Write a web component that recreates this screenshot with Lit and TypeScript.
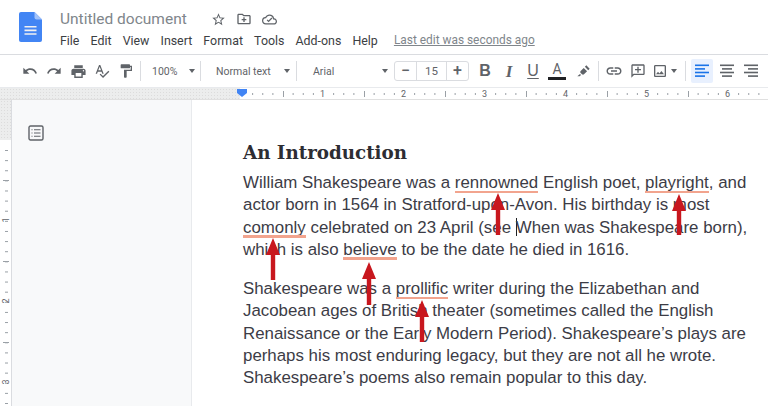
import { LitElement, html, css, svg } from "lit";
import { customElement } from "lit/decorators.js";

const P = {
  undo: "M12.5 8c-2.65 0-5.05.99-6.9 2.6L2 7v9h9l-3.62-3.62c1.39-1.16 3.16-1.88 5.12-1.88 3.54 0 6.55 2.31 7.6 5.5l2.37-.78C21.08 11.03 17.15 8 12.5 8z",
  redo: "M18.4 10.6C16.55 8.99 14.15 8 11.5 8c-4.65 0-8.58 3.03-9.96 7.22L3.9 16c1.05-3.19 4.05-5.5 7.6-5.5 1.95 0 3.73.72 5.12 1.88L13 16h9V7l-3.6 3.6z",
  print: "M19 8H5c-1.66 0-3 1.34-3 3v6h4v4h12v-4h4v-6c0-1.66-1.34-3-3-3zm-3 11H8v-5h8v5zm3-7c-.55 0-1-.45-1-1s.45-1 1-1 1 .45 1 1-.45 1-1 1zm-1-9H6v4h12V3z",
  spell: "M12.45 16h2.09L9.43 3H7.57L2.46 16h2.09l1.12-3h5.64l1.14 3zm-6.02-5L8.5 5.48 10.57 11H6.43zm15.16.59l-8.09 8.09L9.83 16l-1.41 1.41 5.09 5.09L23 13l-1.41-1.41z",
  paint: "M18 4V3c0-.55-.45-1-1-1H5c-.55 0-1 .45-1 1v4c0 .55.45 1 1 1h12c.55 0 1-.45 1-1V6h1v4H9v11c0 .55.45 1 1 1h2c.55 0 1-.45 1-1v-9h8V4h-3z",
  link: "M3.9 12c0-1.71 1.39-3.1 3.1-3.1h4V7H7c-2.76 0-5 2.24-5 5s2.24 5 5 5h4v-1.9H7c-1.71 0-3.1-1.39-3.1-3.1zM8 13h8v-2H8v2zm9-6h-4v1.9h4c1.71 0 3.1 1.39 3.1 3.1s-1.39 3.1-3.1 3.1h-4V17h4c2.76 0 5-2.24 5-5s-2.24-5-5-5z",
  comment: "M20 2H4c-1.1 0-2 .9-2 2v18l4-4h14c1.1 0 2-.9 2-2V4c0-1.1-.9-2-2-2zm0 14H5.2L4 17.2V4h16v12zM11 5.5h2V9h3.5v2H13v3.5h-2V11H7.5V9H11V5.5z",
  image: "M19 5v14H5V5h14m0-2H5c-1.1 0-2 .9-2 2v14c0 1.1.9 2 2 2h14c1.1 0 2-.9 2-2V5c0-1.1-.9-2-2-2zm-4.86 8.86l-3 3.87L9 13.14 6 17h12l-3.86-5.14z",
  pen: "M15.5 3.5l5 5-2.2 2.2-5-5zM11.6 7.4l5 5-4.6 4.6c-.8.8-2.2.8-3 0l-2-2c-.8-.8-.8-2.2 0-3zM6 16.5l1.5 1.5L5.5 20H2z",
  star: "M22 9.24l-7.19-.62L12 2 9.19 8.63 2 9.24l5.46 4.73L5.82 21 12 17.27 18.18 21l-1.63-7.03L22 9.24zM12 15.4l-3.76 2.27 1-4.28-3.32-2.88 4.38-.38L12 6.1l1.71 4.04 4.38.38-3.32 2.88 1 4.28L12 15.4z",
  folder: "M20 6h-8l-2-2H4c-1.1 0-2 .9-2 2v12c0 1.1.9 2 2 2h16c1.1 0 2-.9 2-2V8c0-1.1-.9-2-2-2zm0 12H4V6h5.2l2 2H20v10zM11 9.5h2V12h2.5v2H13v2.5h-2V14H8.5v-2H11V9.5z",
  cloud: "M19.35 10.04A7.49 7.49 0 0 0 12 4C9.11 4 6.6 5.64 5.35 8.04A5.99 5.99 0 0 0 0 14c0 3.31 2.69 6 6 6h13c2.76 0 5-2.24 5-5 0-2.64-2.05-4.78-4.65-4.96zM19 18H6c-2.21 0-4-1.79-4-4 0-2.05 1.53-3.76 3.56-3.97l1.07-.11.5-.95A5.47 5.47 0 0 1 12 6c2.62 0 4.88 1.86 5.39 4.43l.3 1.5 1.53.11A2.98 2.98 0 0 1 22 15c0 1.65-1.35 3-3 3zM10.500 16.200l-3-3 1.400-1.400 1.600 1.600 4.600-4.600 1.400 1.400z",
};

const icon = (d: string, size = 18, fill = "#5f6368") =>
  html`<svg width=${size} height=${size} viewBox="0 0 24 24" fill=${fill}><path d=${d}></path></svg>`;

const alignIcon = (kind: "l" | "c" | "r", color: string) => {
  const rows = [14, 10, 14, 10];
  return html`<svg width="16" height="16" viewBox="0 0 16 16" fill=${color}>
    ${rows.map((w, i) => {
      const x = kind === "l" ? 1 : kind === "r" ? 15 - w : 8 - w / 2;
      return svg`<rect x=${x} y=${1.5 + i * 3.6} width=${w} height="1.6"></rect>`;
    })}
  </svg>`;
};

const horizontalTicks = () => {
  const out: unknown[] = [];
  for (let i = -1; i <= 7; i++) {
    const x0 = 242 + i * 81;
    for (let j = 1; j < 8; j++) {
      if (j === 4) continue;
      const x = x0 + (j * 81) / 8;
      if (x < 240 || x > 768) continue;
      out.push(svg`<rect x=${x} y="5" width="1" height="2" fill="#9aa0a6"></rect>`);
    }
  }
  for (const x of [283, 364, 445, 526, 607, 688]) {
    out.push(svg`<rect x=${x} y="3" width="1" height="6" fill="#9aa0a6"></rect>`);
  }
  return out;
};

const verticalTicks = () => {
  const out: unknown[] = [];
  for (let y = 150; y < 406; y += 10.12) {
    out.push(svg`<rect x="5" y=${y} width="3" height="1" fill="#9aa0a6"></rect>`);
  }
  for (const y of [180, 261, 342]) {
    out.push(svg`<rect x="3" y=${y} width="6" height="1" fill="#9aa0a6"></rect>`);
  }
  return out;
};

@customElement("app-root")
export class AppRoot extends LitElement {
  static styles = css`
    :host {
      display: flex;
      flex-direction: column;
      width: 768px;
      height: 406px;
      overflow: hidden;
      background: #fff;
      font-family: Roboto, "Liberation Sans", sans-serif;
      color: #3c4043;
    }
    svg { display: block; flex: none; }

    .header {
      display: flex;
      height: 55px;
      flex: none;
      box-sizing: border-box;
      border-bottom: 1px solid #dadce0;
      padding: 12px 0 0 19px;
    }
    .logo { width: 23px; height: 30px; margin-right: 18px; }
    .head-col { display: flex; flex-direction: column; }
    .title-row { display: flex; align-items: center; height: 14px; }
    .title { font-size: 15.5px; color: #80868b; width: 151px; white-space: nowrap; }
    .title-icons { display: flex; gap: 10px; align-items: center; }
    .menu { display: flex; font-size: 12.4px; margin-top: 4px; color: #3c4043; height: 20px; align-items: center; }
    .menu span { margin-right: 11.1px; white-space: nowrap; }
    .menu .last { color: #80868b; text-decoration: underline; margin-left: 5px; margin-right: 0; font-size: 11.9px; }

    .toolbar {
      display: flex;
      align-items: center;
      height: 32px;
      flex: none;
      padding-left: 18px;
      font-size: 10.5px;
      color: #5f6368;
    }
    .btn { display: flex; align-items: center; justify-content: center; width: 24px; height: 24px; flex: none; }
    .sep { width: 1px; height: 20px; background: #dadce0; flex: none; margin: 0 2px; }
    .sep-flush { margin: 0; }
    .sep-img { margin: 0 5px 0 1px; }
    .drop { display: flex; align-items: center; height: 24px; flex: none; box-sizing: border-box; white-space: nowrap; }
    .drop .caret { margin-left: auto; width: 0; height: 0; border: 3.5px solid transparent; border-top: 4px solid #5f6368; border-bottom: 0; }
    .zoomd { width: 58px; padding: 0 5px 0 10px; margin-left: -1px; }
    .styled { width: 95px; padding: 0 6px 0 15px; }
    .fontd { width: 94px; padding: 0 3px 0 16px; margin-right: 3px; }
    .sizebox {
      display: flex; align-items: center; width: 75px; height: 20px; flex: none; box-sizing: border-box;
      border: 1px solid #dadce0; border-radius: 3px; font-size: 12px; margin-right: 4px;
    }
    .sizebox span { flex: none; width: 21px; text-align: center; font-size: 16px; font-weight: 500; line-height: 18px; }
    .sizebox .num { flex: 1; font-size: 11.5px; font-weight: 400; border-left: 1px solid #dadce0; border-right: 1px solid #dadce0; color: #5f6368; }
    .fmt { font-family: "Liberation Sans", sans-serif; font-size: 16px; line-height: 1; color: #5f6368; }
    .b { font-weight: 700; }
    .i { font-family: "Liberation Serif", serif; font-style: italic; font-size: 17px; font-weight: 700; }
    .u { text-decoration: underline; text-underline-offset: 2px; }
    .acol { display: flex; flex-direction: column; align-items: center; width: 18px; }
    .acol b { font-weight: 400; font-size: 14px; line-height: 15px; color: #5f6368; }
    .acol i { display: block; width: 18px; height: 3px; background: #202124; }
    .penbtn { margin-left: 3px; }
    .linkbtn { margin-left: 1px; }
    .imgbtn { width: 19px; }
    .imgcaret { width: 0; height: 0; border: 3.5px solid transparent; border-top: 4px solid #5f6368; border-bottom: 0; margin: 0 7px 0 2px; }
    .active { background: #e8f0fe; border-radius: 2px; width: 22px; margin-right: 2px; }

    .ruler {
      position: relative;
      display: flex;
      height: 13px;
      flex: none;
      box-sizing: border-box;
      border-top: 1px solid #e8eaed;
      border-bottom: 1px solid #e0e0e0;
      font-size: 9px;
      color: #5f6368;
    }
    .ruler-gray {
      width: 240px;
      flex: none;
      background-color: #eceded;
      background-image: radial-gradient(#dcdcdc 0.7px, transparent 0.8px);
      background-size: 3px 3px;
    }
    .ruler-white { flex: 1; display: flex; padding-left: 42px; line-height: 12px; }
    .ruler-white span { width: 81px; flex: none; text-align: center; }
    .ruler-ticks { position: absolute; left: 0; top: 0; pointer-events: none; }
    .tab { position: absolute; left: 237px; top: 1px; width: 10px; height: 8px; }

    .main { display: flex; flex: 1; min-height: 0; }
    .vruler {
      position: relative;
      width: 12px;
      flex: none;
      border-right: 1px solid #dadce0;
      box-sizing: border-box;
      font-size: 9px;
      color: #5f6368;
    }
    .vruler .gray {
      height: 40px;
      background-color: #eceded;
      background-image: radial-gradient(#dcdcdc 0.7px, transparent 0.8px);
      background-size: 3px 3px;
    }
    .vnums { display: flex; flex-direction: column; padding-top: 74px; }
    .vnums span { height: 81px; line-height: 12px; width: 11px; text-align: center; flex: none; }
    .vnums b { display: block; font-weight: 400; transform: rotate(-90deg); }
    .vticks { position: absolute; left: 0; top: -100px; }

    .side { width: 180px; flex: none; background: #f8f9fa; border-right: 1px solid #e8eaed; box-sizing: border-box; padding: 25px 0 0 16px; }

    .page {
      position: relative;
      flex: 1;
      padding: 41px 0 0 51px;
      font-family: "Liberation Sans", Arial, sans-serif;
      font-size: 16.87px;
      line-height: 22.25px;
      color: #3c3c46;
      white-space: nowrap;
    }
    h1 {
      margin: 0 0 7px;
      font-family: "DejaVu Serif", serif;
      font-size: 18.3px;
      line-height: 24px;
      font-weight: 700;
      color: #2d2d33;
    }
    p { margin: 0 0 17px; }
    .err { position: relative; }
    .err::after {
      content: ""; position: absolute; left: 0; right: 0; bottom: -1px; height: 2.5px; background: #f2a48e;
    }
    .caret-mark { display: inline-block; width: 1.5px; height: 18px; background: #202124; vertical-align: -3px; margin-right: -1.5px; }
    .arrow { position: absolute; }
  `;

  private arrow(x: number, y1: number, y2: number) {
    const w = 18;
    return html`<svg class="arrow" style="left:${x - w / 2 - 192}px;top:${y1 - 100}px" width=${w} height=${y2 - y1} viewBox="0 0 ${w} ${y2 - y1}">
      <path fill="#c8171e" d="M${w / 2} 0L${w / 2 + 7} 17H${w / 2 + 2.2}V${y2 - y1}H${w / 2 - 2.2}V17H${w / 2 - 7}Z"></path>
    </svg>`;
  }

  render() {
    return html`
      <div class="header">
        <svg class="logo" viewBox="0 0 23 30">
          <path fill="#4285f4" d="M2 0h13.500L23 7.500V28a2 2 0 0 1-2 2H2a2 2 0 0 1-2-2V2a2 2 0 0 1 2-2z"></path>
          <path fill="#a1c2fa" d="M15.500 0L23 7.500h-5.500a2 2 0 0 1-2-2z"></path>
          <path fill="#f1f1f1" d="M5.500 14h12v1.600h-12zM5.500 17.600h12v1.600h-12zM5.500 21.200h12v1.600h-12z"></path>
        </svg>
        <div class="head-col">
          <div class="title-row">
            <span class="title">Untitled document</span>
            <div class="title-icons">
              ${icon(P.star, 15)}${icon(P.folder, 16)}${icon(P.cloud, 15)}
            </div>
          </div>
          <div class="menu">
            <span>File</span><span>Edit</span><span>View</span><span>Insert</span><span>Format</span><span>Tools</span><span>Add-ons</span><span>Help</span>
            <span class="last">Last edit was seconds ago</span>
          </div>
        </div>
      </div>

      <div class="toolbar">
        <div class="btn">${icon(P.undo, 16)}</div>
        <div class="btn">${icon(P.redo, 16)}</div>
        <div class="btn">${icon(P.print, 17)}</div>
        <div class="btn">${icon(P.spell, 16)}</div>
        <div class="btn">${icon(P.paint, 16)}</div>
        <div class="sep"></div>
        <div class="drop zoomd"><span>100%</span><i class="caret"></i></div>
        <div class="sep sep-flush"></div>
        <div class="drop styled"><span>Normal text</span><i class="caret"></i></div>
        <div class="sep sep-flush"></div>
        <div class="drop fontd"><span>Arial</span><i class="caret"></i></div>
        <div class="sizebox"><span>−</span><span class="num">15</span><span>+</span></div>
        <div class="btn"><span class="fmt b">B</span></div>
        <div class="btn"><span class="fmt i">I</span></div>
        <div class="btn"><span class="fmt u">U</span></div>
        <div class="btn"><div class="acol"><b>A</b><i></i></div></div>
        <div class="btn penbtn">${icon(P.pen, 16)}</div>
        <div class="sep"></div>
        <div class="btn linkbtn">${icon(P.link, 18)}</div>
        <div class="btn">${icon(P.comment, 16)}</div>
        <div class="btn imgbtn">${icon(P.image, 16)}</div>
        <i class="imgcaret"></i>
        <div class="sep sep-img"></div>
        <div class="btn active">${alignIcon("l", "#1a73e8")}</div>
        <div class="btn">${alignIcon("c", "#5f6368")}</div>
        <div class="btn">${alignIcon("r", "#5f6368")}</div>
      </div>

      <div class="ruler">
        <div class="ruler-gray"></div>
        <div class="ruler-white">
          <span>1</span><span>2</span><span>3</span><span>4</span><span>5</span><span>6</span>
        </div>
        <svg class="ruler-ticks" width="768" height="12">${horizontalTicks()}</svg>
        <svg class="tab" viewBox="0 0 10 8"><path fill="#4285f4" d="M0 0h10v4L5 8 0 4z"></path></svg>
      </div>

      <div class="main">
        <div class="vruler">
          <div class="gray"></div>
          <svg class="vticks" width="12" height="406">${verticalTicks()}</svg>
          <div class="vnums"><span><b>1</b></span><span><b>2</b></span><span><b>3</b></span></div>
        </div>
        <div class="side">
          <svg width="16" height="16" viewBox="0 0 16 16" fill="none" stroke="#5f6368">
            <rect x="1" y="1" width="14" height="14" rx="1.5" stroke-width="1.4"></rect>
            <path d="M6 4.750h6.500M6 8h6.500M6 11.250h6.500M3.500 4.750h1M3.500 8h1M3.500 11.250h1" stroke-width="1.200"></path>
          </svg>
        </div>
        <div class="page">
          <h1>An Introduction</h1>
          <p>William Shakespeare was a <span class="err">rennowned</span> English poet, <span class="err">playright</span>, and<br />
          actor born in 1564 in Stratford-upon-Avon. His birthday is most<br />
          <span class="err">comonly</span> celebrated on 23 April (see <i class="caret-mark"></i>When was Shakespeare born),<br />
          which is also <span class="err">believe</span> to be the date he died in 1616.</p>
          <p>Shakespeare was a <span class="err">prollific</span> writer during the Elizabethan and<br />
          Jacobean ages of British theater (sometimes called the English<br />
          Renaissance or the Early Modern Period). Shakespeare’s plays are<br />
          perhaps his most enduring legacy, but they are not all he wrote.<br />
          Shakespeare’s poems also remain popular to this day.</p>
          ${this.arrow(498, 193, 235)}
          ${this.arrow(679, 194, 235)}
          ${this.arrow(273, 238, 280)}
          ${this.arrow(369, 262, 305)}
          ${this.arrow(422, 300, 342)}
        </div>
      </div>
    `;
  }
}
